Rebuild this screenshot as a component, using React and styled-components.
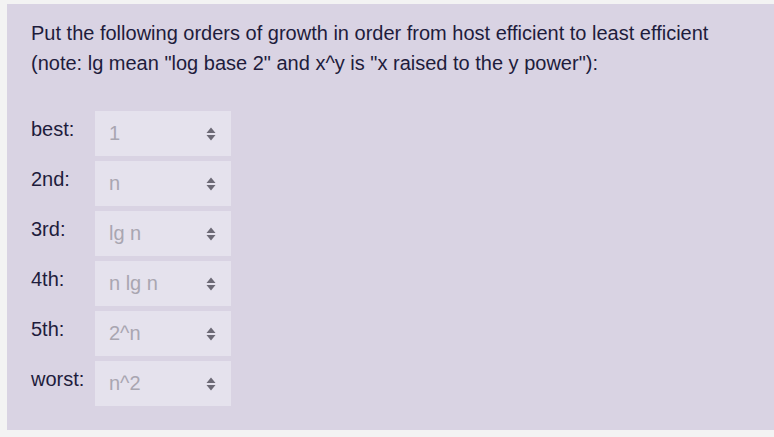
import React from "react";
import styled, { createGlobalStyle } from "styled-components";

const GlobalStyle = createGlobalStyle`
  html, body {
    margin: 0;
    padding: 0;
    background: #f3f3f3;
  }
  body {
    font-family: "Liberation Sans", Arial, sans-serif;
  }
`;

const Page = styled.div`
  padding: 4px 0 0 7px;
`;

const Panel = styled.div`
  background: #d9d3e3;
  padding: 14px 24px 24px 24px;
`;

const Prompt = styled.p`
  margin: 0 0 33px 0;
  font-size: 20px;
  line-height: 30px;
  color: #1e1c3c;
`;

const Rows = styled.div`
  display: grid;
  grid-template-columns: 64px 136px;
  row-gap: 5px;
`;

const Label = styled.div`
  font-size: 20px;
  line-height: 30px;
  padding-top: 3px;
  color: #1e1c3c;
`;

const SelectBox = styled.div`
  height: 45px;
  box-sizing: border-box;
  background: #e5e2ed;
  display: flex;
  align-items: center;
  justify-content: space-between;
  padding: 0 15px 0 14px;
  font-size: 20px;
  color: #a9a6b1;
`;

const Arrows = styled.svg`
  width: 10px;
  height: 16px;
  flex: none;
  fill: #6c6975;
`;

const SortIcon = () => (
  <Arrows viewBox="0 0 10 16">
    <path d="M0.5 7 L5 1.5 L9.5 7 Z" />
    <path d="M0.5 9 L5 14.5 L9.5 9 Z" />
  </Arrows>
);

const rows = [
  ["best:", "1"],
  ["2nd:", "n"],
  ["3rd:", "lg n"],
  ["4th:", "n lg n"],
  ["5th:", "2^n"],
  ["worst:", "n^2"],
];

export default function App() {
  return (
    <>
      <GlobalStyle />
      <Page>
        <Panel>
          <Prompt>
            Put the following orders of growth in order from host efficient to least efficient
            <br />
            (note: lg mean "log base 2" and x^y is "x raised to the y power"):
          </Prompt>
          <Rows>
            {rows.map(([label, value]) => (
              <React.Fragment key={label}>
                <Label>{label}</Label>
                <SelectBox>
                  <span>{value}</span>
                  <SortIcon />
                </SelectBox>
              </React.Fragment>
            ))}
          </Rows>
        </Panel>
      </Page>
    </>
  );
}
